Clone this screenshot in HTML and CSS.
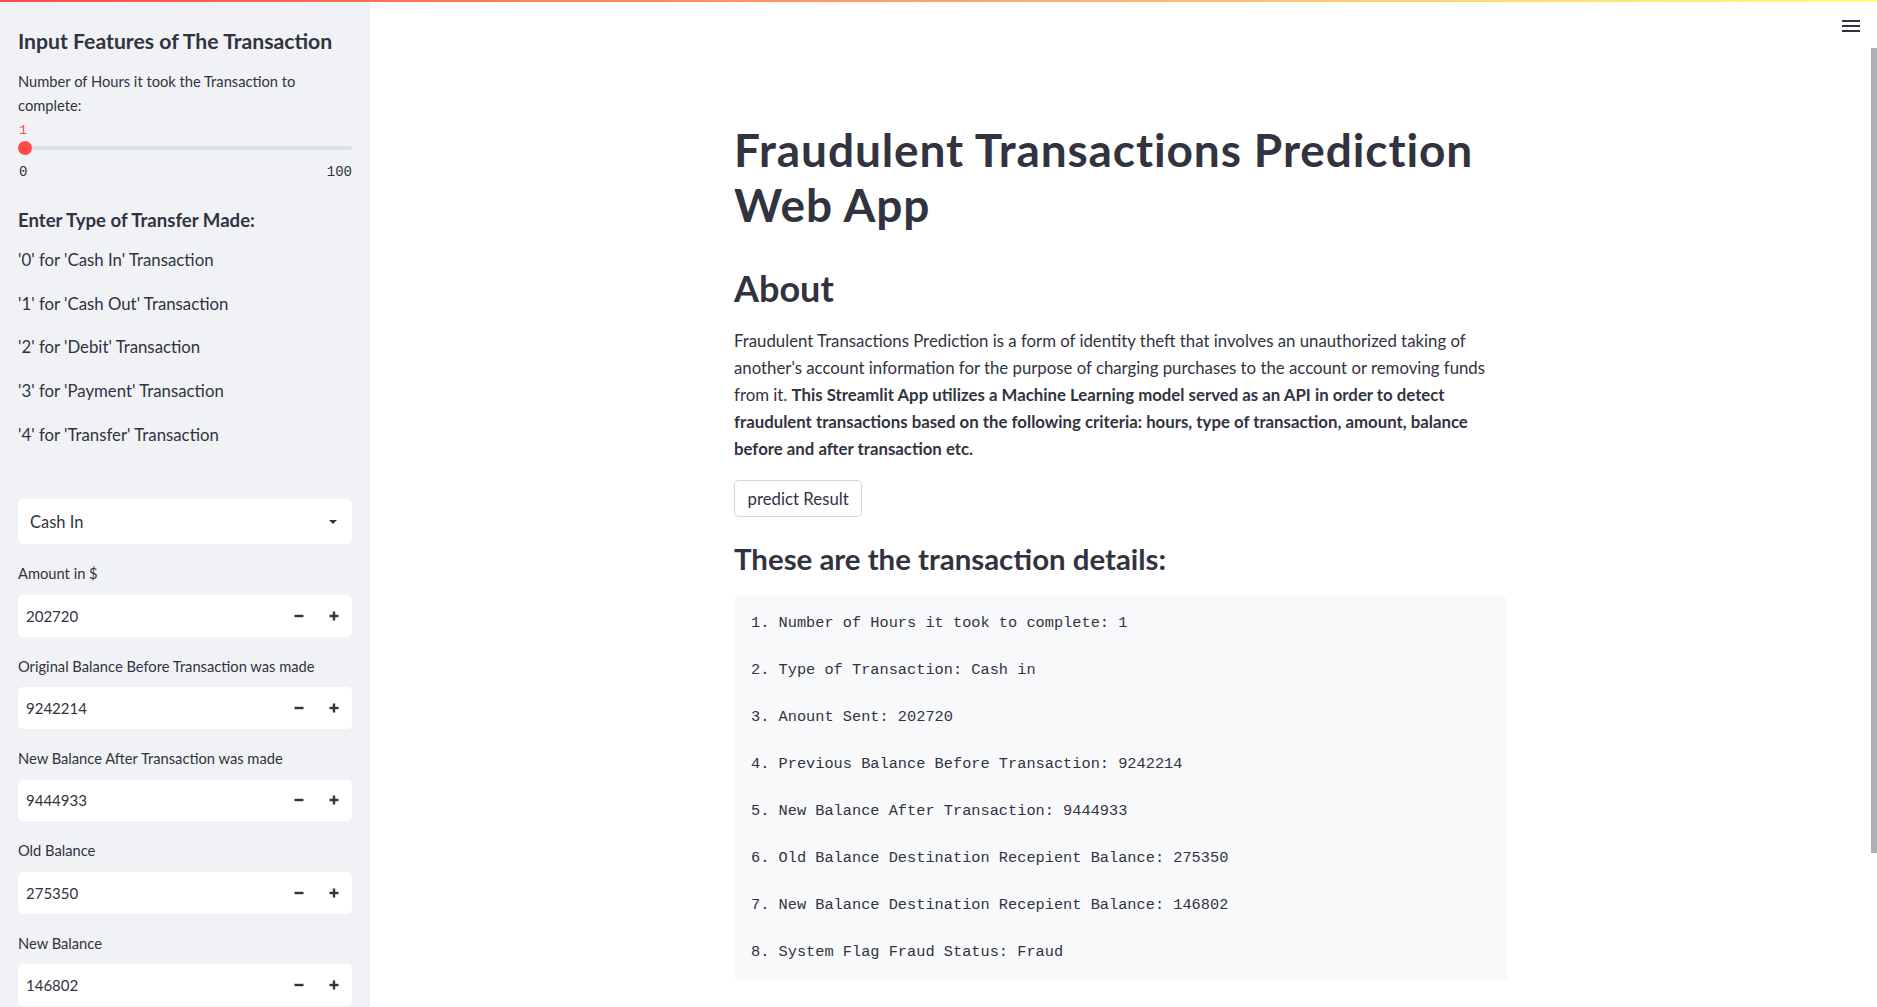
FILE: index.html
```
<!DOCTYPE html>
<html lang="en">
<head>
<meta charset="utf-8">
<title>Fraudulent Transactions Prediction Web App</title>
<link rel="stylesheet" href="styles.css">
</head>
<body>
<div class="decoration"></div>
<div class="app">
  <aside class="sidebar">
    <h2 class="sb-title">Input Features of The Transaction</h2>
    <div class="slider">
      <div class="wlabel wrap">Number of Hours it took the Transaction to complete:</div>
      <div class="slider-value">1</div>
      <div class="track"><div class="rail"></div><div class="thumb"></div></div>
      <div class="ticks"><span>0</span><span>100</span></div>
    </div>
    <p class="sb-heading">Enter Type of Transfer Made:</p>
    <p class="sb-item">'0' for 'Cash In' Transaction</p>
    <p class="sb-item">'1' for 'Cash Out' Transaction</p>
    <p class="sb-item">'2' for 'Debit' Transaction</p>
    <p class="sb-item">'3' for 'Payment' Transaction</p>
    <p class="sb-item">'4' for 'Transfer' Transaction</p>
    <div class="select">
      <span>Cash In</span>
      <svg class="caret" width="8" height="4" viewBox="0 0 8 4"><path d="M0 0H8L4 4Z" fill="#31333f"/></svg>
    </div>

    <div class="num-field">
      <div class="wlabel">Amount in $</div>
      <div class="num-input"><span class="val">202720</span>
        <div class="steps">
          <svg width="10" height="10" viewBox="0 0 10 10"><rect x="0.5" y="3.8" width="9" height="2.4" fill="#31333f"/></svg>
          <svg width="10" height="10" viewBox="0 0 10 10"><rect x="0.5" y="3.8" width="9" height="2.4" fill="#31333f"/><rect x="3.8" y="0.5" width="2.4" height="9" fill="#31333f"/></svg>
        </div>
      </div>
    </div>
    <div class="num-field">
      <div class="wlabel">Original Balance Before Transaction was made</div>
      <div class="num-input"><span class="val">9242214</span>
        <div class="steps">
          <svg width="10" height="10" viewBox="0 0 10 10"><rect x="0.5" y="3.8" width="9" height="2.4" fill="#31333f"/></svg>
          <svg width="10" height="10" viewBox="0 0 10 10"><rect x="0.5" y="3.8" width="9" height="2.4" fill="#31333f"/><rect x="3.8" y="0.5" width="2.4" height="9" fill="#31333f"/></svg>
        </div>
      </div>
    </div>
    <div class="num-field">
      <div class="wlabel">New Balance After Transaction was made</div>
      <div class="num-input"><span class="val">9444933</span>
        <div class="steps">
          <svg width="10" height="10" viewBox="0 0 10 10"><rect x="0.5" y="3.8" width="9" height="2.4" fill="#31333f"/></svg>
          <svg width="10" height="10" viewBox="0 0 10 10"><rect x="0.5" y="3.8" width="9" height="2.4" fill="#31333f"/><rect x="3.8" y="0.5" width="2.4" height="9" fill="#31333f"/></svg>
        </div>
      </div>
    </div>
    <div class="num-field">
      <div class="wlabel">Old Balance</div>
      <div class="num-input"><span class="val">275350</span>
        <div class="steps">
          <svg width="10" height="10" viewBox="0 0 10 10"><rect x="0.5" y="3.8" width="9" height="2.4" fill="#31333f"/></svg>
          <svg width="10" height="10" viewBox="0 0 10 10"><rect x="0.5" y="3.8" width="9" height="2.4" fill="#31333f"/><rect x="3.8" y="0.5" width="2.4" height="9" fill="#31333f"/></svg>
        </div>
      </div>
    </div>
    <div class="num-field">
      <div class="wlabel">New Balance</div>
      <div class="num-input"><span class="val">146802</span>
        <div class="steps">
          <svg width="10" height="10" viewBox="0 0 10 10"><rect x="0.5" y="3.8" width="9" height="2.4" fill="#31333f"/></svg>
          <svg width="10" height="10" viewBox="0 0 10 10"><rect x="0.5" y="3.8" width="9" height="2.4" fill="#31333f"/><rect x="3.8" y="0.5" width="2.4" height="9" fill="#31333f"/></svg>
        </div>
      </div>
    </div>
  </aside>

  <main class="main">
    <div class="menu">
      <svg width="18" height="12" viewBox="0 0 18 12"><rect x="0" y="0" width="18" height="2" fill="#31333f"/><rect x="0" y="5" width="18" height="2" fill="#31333f"/><rect x="0" y="10" width="18" height="2" fill="#31333f"/></svg>
    </div>
    <div class="scroll-thumb"></div>
    <div class="block">
      <h1 class="title">Fraudulent Transactions Prediction Web App</h1>
      <h2 class="h2">About</h2>
      <p class="para">Fraudulent Transactions Prediction is a form of identity theft that involves an unauthorized taking of another's account information for the purpose of charging purchases to the account or removing funds from it. <strong>This Streamlit App utilizes a Machine Learning model served as an API in order to detect fraudulent transactions based on the following criteria: hours, type of transaction, amount, balance before and after transaction etc.</strong></p>
      <button class="btn">predict Result</button>
      <h3 class="h3">These are the transaction details:</h3>
      <pre class="code">1. Number of Hours it took to complete: 1

2. Type of Transaction: Cash in

3. Anount Sent: 202720

4. Previous Balance Before Transaction: 9242214

5. New Balance After Transaction: 9444933

6. Old Balance Destination Recepient Balance: 275350

7. New Balance Destination Recepient Balance: 146802

8. System Flag Fraud Status: Fraud</pre>
    </div>
  </main>
</div>
</body>
</html>
```

FILE: styles.css
```
* { box-sizing: border-box; }
html, body {
  margin: 0;
  padding: 0;
  height: 100%;
  overflow: hidden;
}
body {
  font-family: Lato, "Noto Sans", sans-serif;
  color: #31333f;
  background: #ffffff;
  position: relative;
}
.decoration {
  position: absolute;
  top: 0; left: 0; right: 0;
  height: 2px;
  background: linear-gradient(90deg, #ff4b4b, #fffd80);
  z-index: 5;
}
.app {
  display: flex;
  height: 1007px;
}

/* ---------- sidebar ---------- */
.sidebar {
  width: 370px;
  flex: 0 0 370px;
  background: #f0f2f6;
  padding: 27px 18px 0 18px;
  overflow: hidden;
}
.sb-title {
  margin: 0;
  font-size: 21.2px;
  line-height: 29px;
  font-weight: 700;
  white-space: nowrap;
}
.wlabel {
  font-size: 14.7px;
  line-height: 23.5px;
}
.wlabel.wrap {
  margin-top: 13px;
  line-height: 24px;
  width: 300px;
}
.slider-value {
  margin-top: 6px;
  margin-left: 1px;
  font-family: "Liberation Mono", monospace;
  font-size: 13.5px;
  line-height: 16px;
  color: #ff4b4b;
}
.track {
  position: relative;
  height: 14px;
  margin-top: 1.6px;
}
.rail {
  position: absolute;
  left: 3px; right: 0;
  top: 5px;
  height: 4px;
  border-radius: 2px;
  background: #dde0e8;
}
.thumb {
  position: absolute;
  left: 0; top: 0;
  width: 14px; height: 14px;
  border-radius: 50%;
  background: #ff4b4b;
}
.ticks {
  margin-top: 8.4px;
  display: flex;
  justify-content: space-between;
  font-family: "Liberation Mono", monospace;
  font-size: 14px;
  line-height: 18px;
  padding-left: 1px;
}
.sb-heading {
  margin: 26.3px 0 0 0;
  font-size: 18.6px;
  line-height: 26.9px;
  font-weight: 700;
}
.sb-item {
  margin: 0;
  font-size: 16.8px;
  line-height: 26.9px;
}
.sb-heading + .sb-item { margin-top: 13px; }
.sb-item + .sb-item { margin-top: 16.7px; }
.select {
  margin-top: 51px;
  height: 45px;
  background: #ffffff;
  border-radius: 5px;
  display: flex;
  align-items: center;
  justify-content: space-between;
  padding: 0 15px 0 12px;
  font-size: 16.5px;
}
.caret { display: block; }
.num-field { margin-top: 18px; }
.num-input {
  margin-top: 9px;
  height: 41.8px;
  background: #ffffff;
  border-radius: 5px;
  display: flex;
  align-items: center;
  justify-content: space-between;
  padding: 0 13px 0 8px;
  font-size: 15px;
}
.steps {
  display: flex;
  gap: 25px;
  align-items: center;
}
.steps svg { display: block; }

/* ---------- main ---------- */
.main {
  flex: 1;
  position: relative;
  padding-right: 6px;
  overflow: hidden;
}
.menu {
  position: absolute;
  top: 20px;
  right: 17px;
}
.menu svg { display: block; }
.scroll-thumb {
  position: absolute;
  right: 0;
  top: 48px;
  width: 6px;
  height: 805px;
  background: #afaeb3;
}
.block {
  width: 773px;
  margin: 0 auto;
  padding-top: 121.5px;
}
.title {
  margin: 0;
  font-size: 46px;
  line-height: 55.4px;
  font-weight: 700;
  letter-spacing: 0.9px;
}
.h2 {
  margin: 35px 0 0 0;
  font-size: 36px;
  line-height: 43.2px;
  font-weight: 700;
}
.para {
  margin: 17.5px 0 0 0;
  font-size: 16.8px;
  line-height: 26.9px;
}
.para strong { font-weight: 700; }
.btn {
  display: block;
  margin-top: 17px;
  height: 37.5px;
  padding: 0 12.6px;
  background: #ffffff;
  border: 1px solid rgba(49, 51, 63, 0.2);
  border-radius: 5px;
  font-family: inherit;
  font-size: 16.8px;
  color: #31333f;
}
.h3 {
  margin: 23.5px 0 0 0;
  font-size: 29.4px;
  line-height: 35.3px;
  font-weight: 700;
}
.code {
  margin: 19.8px 0 0 0;
  background: #f8f9fb;
  border-radius: 5px;
  padding: 16.8px 17px;
  font-family: "Liberation Mono", monospace;
  font-size: 15.3px;
  line-height: 23.45px;
  color: #31333f;
}
```
